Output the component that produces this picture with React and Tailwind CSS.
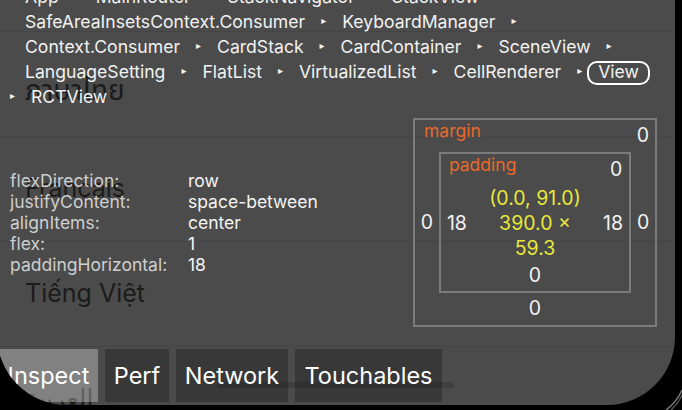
import React from "react";

const crumbs = [
  ["App", "MainRouter", "StackNavigator", "StackView"],
  ["SafeAreaInsetsContext.Consumer", "KeyboardManager"],
  ["Context.Consumer", "CardStack", "CardContainer", "SceneView"],
  ["LanguageSetting", "FlatList", "VirtualizedList", "CellRenderer", "View"],
];

const props = [
  ["flexDirection:", "row"],
  ["justifyContent:", "space-between"],
  ["alignItems:", "center"],
  ["flex:", "1"],
  ["paddingHorizontal:", "18"],
];

const languages = [
  ["English", "text-[25px]"],
  ["ภาษาไทย", "text-[28px] pt-[12px]"],
  ["Français", "text-[25px]"],
  ["Tiếng Việt", "text-[25px]"],
  ["العربية", "text-[25px]"],
];

function Sep() {
  return (
    <span className="w-[15px] flex justify-center items-center mb-[4px] text-[10px] leading-none font-[family-name:'DejaVu_Sans',sans-serif]">
      ▸
    </span>
  );
}

function Crumb({ name, selected }) {
  return (
    <span
      className={
        "h-[24px] px-[9px] flex items-center border-2 rounded-[10px] " +
        (selected ? "border-white" : "border-transparent")
      }
    >
      {name}
    </span>
  );
}

export default function App() {
  return (
    <div className="relative w-[682px] h-[410px] bg-black overflow-hidden font-[family-name:Inter,'Noto_Sans','Noto_Sans_Thai','DejaVu_Sans',sans-serif]">
      <div className="relative w-[678px] h-[405px] -ml-[3px] bg-[#4b4b4b] rounded-bl-[70px] rounded-br-[68px] overflow-hidden">
        {/* app underneath the inspector */}
        <div className="-mt-[73px] flex flex-col">
          {languages.map(([l, size]) => (
            <div
              key={l}
              className={"h-[105px] border-b border-[#454545] flex items-center pl-[28px] text-[#1b1b1b] " + size}
            >
              {l}
            </div>
          ))}
        </div>
        <div className="absolute left-[220px] top-[382px] w-[237px] h-[6px] rounded-full bg-[#404040]" />

        {/* inspector overlay */}
        <div className="absolute inset-0 flex flex-col text-white">
          <div className="-mt-[15px] flex flex-col text-[17.6px] text-[#f2f2f2]">
            {crumbs.map((row, r) => (
              <div key={r} className="h-[25px] flex items-center pl-[17px]">
                {row.map((c, i) => (
                  <React.Fragment key={c}>
                    <Crumb name={c} selected={c === "View"} />
                    {i < row.length - 1 || r < 3 ? <Sep /> : null}
                  </React.Fragment>
                ))}
              </div>
            ))}
            <div className="h-[25px] flex items-center pl-[8px]">
              <Sep />
              <Crumb name="RCTView" />
            </div>
          </div>

          <div className="mt-[8px] flex items-center">
            <div className="pl-[13px] flex flex-col text-[17.5px] leading-[21px]">
              {props.map(([k, v]) => (
                <div key={k} className="flex">
                  <span className="w-[178px] text-[#cfcfcf]">{k}</span>
                  <span className="text-[#f4f4f4]">{v}</span>
                </div>
              ))}
            </div>

            <div className="ml-auto mr-[18px] w-[244px] border-2 border-[#7b7b7b] flex flex-col text-[19.5px] text-[#f2f2f2]">
              <div className="h-[32px] flex items-center">
                <span className="flex-1 ml-[9px] mb-[10px] text-[17.5px] text-[#e8692a]">margin</span>
                <span className="w-[24px] text-center">0</span>
              </div>
              <div className="flex items-center">
                <span className="w-[24px] text-center">0</span>
                <div className="w-[193px] h-[141px] border-2 border-[#7b7b7b] flex flex-col">
                  <div className="h-[32px] flex items-center">
                    <span className="flex-1 ml-[8px] mb-[10px] text-[17.5px] text-[#e8692a]">padding</span>
                    <span className="w-[24px] mr-[1px] text-center">0</span>
                  </div>
                  <div className="h-[75px] flex items-center justify-around">
                    <span className="w-[20px] text-center">18</span>
                    <span className="w-[112px] text-center leading-[25px] text-[#e8e83c]">
                      (0.0, 91.0) 390.0 × 59.3
                    </span>
                    <span className="w-[20px] text-center">18</span>
                  </div>
                  <div className="h-[30px] flex items-center justify-center">0</div>
                </div>
                <span className="w-[24px] text-center">0</span>
              </div>
              <div className="h-[32px] flex items-center justify-center">0</div>
            </div>
          </div>

          <div className="mt-auto mb-[3px] pl-[2px] flex gap-[7px] text-[23.5px] text-white">
            <div className="w-[99px] h-[53px] flex items-center justify-center bg-white/30">Inspect</div>
            <div className="w-[64px] h-[53px] flex items-center justify-center bg-black/25">Perf</div>
            <div className="w-[112px] h-[53px] flex items-center justify-center bg-black/25">Network</div>
            <div className="w-[147px] h-[53px] flex items-center justify-center bg-black/25">Touchables</div>
          </div>
        </div>
      </div>
      <svg className="absolute right-0 bottom-0" width="20" height="24" viewBox="0 0 20 24">
        <path d="M20 4 Q15 16 4 24" stroke="#7a7a7a" strokeWidth="1.5" fill="none" />
        <path d="M20 9 Q16 18 9 24" stroke="#555" strokeWidth="1.5" fill="none" />
      </svg>
    </div>
  );
}
